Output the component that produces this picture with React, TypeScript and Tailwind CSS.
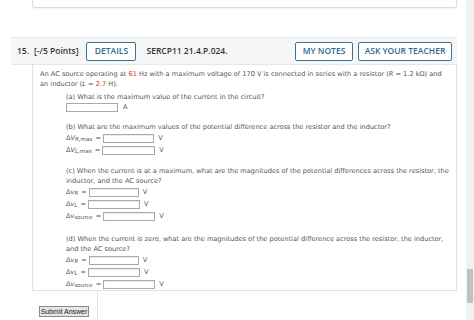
import React from 'react';

const body = { fontFamily: '"DejaVu Sans", Verdana, sans-serif' };
const head = { fontFamily: '"Open Sans", "Liberation Sans", sans-serif' };

const Red = ({ children }: { children: React.ReactNode }) => (
  <span className="text-[#d0312d]">{children}</span>
);

interface RowProps {
  sym: string;
  sub: string;
  subItalic?: boolean;
  unit: string;
  inputW?: string;
}

const AnswerRow: React.FC<RowProps> = ({ sym, sub, subItalic = true, unit, inputW = 'w-[51px]' }) => (
  <div className="flex items-center h-[12px] whitespace-nowrap">
    <span>
      Δ<span className="italic">{sym}</span>
      <sub className={`text-[5.5px] ${subItalic ? 'italic' : ''}`}>{sub}</sub>
    </span>
    <span className="ml-[3px] mr-[2px]">=</span>
    <span className={`${inputW} h-[9px] border border-[#a9a9a9] bg-white shadow-[inset_0_1px_1px_rgba(0,0,0,0.08)]`} />
    <span className="ml-[4px]">{unit}</span>
  </div>
);

export default function App() {
  return (
    <div className="w-[474px] h-[320px] overflow-hidden bg-white flex">
      <div className="w-[466px] flex flex-col">
        {/* previous question card */}
        <div className="ml-[32px] w-[425px] h-[9px] border border-t-0 border-[#dcdcdc] rounded-b-[3px] shadow-[0_1px_2px_rgba(0,0,0,0.05)]" />

        {/* question header */}
        <div
          className="mt-[29px] ml-[11px] w-[446px] h-[30px] bg-[#f6f6f6] border-y border-[#e6e6e6] flex items-center pl-[6px] pr-[5px] text-[8.5px] font-semibold text-[#333]"
          style={head}
        >
          <span>15.</span>
          <span className="ml-[5px]">[-/5 Points]</span>
          <button className="ml-auto-none ml-[8px] w-[50px] h-[19px] border border-[#3c7193] rounded-[2px] bg-white text-[#2f6a8e]">
            DETAILS
          </button>
          <span className="ml-[10px] text-[#333]">SERCP11 21.4.P.024.</span>
          <button className="ml-auto w-[58px] h-[19px] border border-[#3c7193] rounded-[2px] bg-white text-[#2f6a8e]">
            MY NOTES
          </button>
          <button className="ml-[5px] w-[94px] h-[19px] border border-[#3c7193] rounded-[2px] bg-white text-[#2f6a8e]">
            ASK YOUR TEACHER
          </button>
        </div>

        {/* question body */}
        <div
          className="ml-[32px] w-[425px] h-[239px] border-x border-b border-[#e2e2e2] pl-[7px] pt-[4px] text-[6.6px] leading-[10px] text-[#555]"
          style={body}
        >
          <p className="whitespace-nowrap">
            An AC source operating at <Red>61</Red> Hz with a maximum voltage of 170 V is connected in series with a resistor (<span className="italic">R</span> = 1.2 kΩ) and
          </p>
          <p className="whitespace-nowrap">
            an inductor (<span className="italic">L</span> = <Red>2.7</Red> H).
          </p>

          <div className="ml-[26px] mt-[3px]">
            <p>(a) What is the maximum value of the current in the circuit?</p>
            <div className="flex items-center h-[10px]">
              <span className="w-[52px] h-[9px] border border-[#a9a9a9] bg-white" />
              <span className="ml-[5px]">A</span>
            </div>
          </div>

          <div className="ml-[26px] mt-[10px]">
            <p>(b) What are the maximum values of the potential difference across the resistor and the inductor?</p>
            <AnswerRow sym="V" sub="R,max" unit="V" />
            <AnswerRow sym="V" sub="L,max" unit="V" inputW="w-[53px]" />
          </div>

          <div className="ml-[26px] mt-[10px]">
            <p className="whitespace-nowrap">
              (c) When the current is at a maximum, what are the magnitudes of the potential differences across the resistor, the
              <br />
              inductor, and the AC source?
            </p>
            <AnswerRow sym="v" sub="R" unit="V" inputW="w-[50px]" />
            <AnswerRow sym="v" sub="L" unit="V" inputW="w-[52px]" />
            <AnswerRow sym="v" sub="source" subItalic={false} unit="V" inputW="w-[52px]" />
          </div>

          <div className="ml-[26px] mt-[12px]">
            <p className="whitespace-nowrap">
              (d) When the current is zero, what are the magnitudes of the potential difference across the resistor, the inductor,
              <br />
              and the AC source?
            </p>
            <AnswerRow sym="v" sub="R" unit="V" inputW="w-[50px]" />
            <AnswerRow sym="v" sub="L" unit="V" inputW="w-[52px]" />
            <AnswerRow sym="v" sub="source" subItalic={false} unit="V" inputW="w-[52px]" />
          </div>
        </div>

        {/* submit row */}
        <div className="flex flex-1">
          <div className="pl-[39px] pt-[5px] w-[97px]">
            <button
              className="w-[50px] h-[11px] border border-[#8a8a8a] bg-[#e6e6e6] text-[7px] leading-[9px] text-[#222]"
              style={{ fontFamily: '"Liberation Sans", Arial, sans-serif' }}
            >
              Submit Answer
            </button>
          </div>
          <div className="w-[360px] border-l border-[#e2e2e2]" />
        </div>
      </div>

      {/* scrollbar */}
      <div className="w-[8px] bg-[#f1f1f1] pt-[269px] pl-[1px] pr-[1px]">
        <div className="h-[34px] bg-[#c1c1c1]" />
      </div>
    </div>
  );
}
